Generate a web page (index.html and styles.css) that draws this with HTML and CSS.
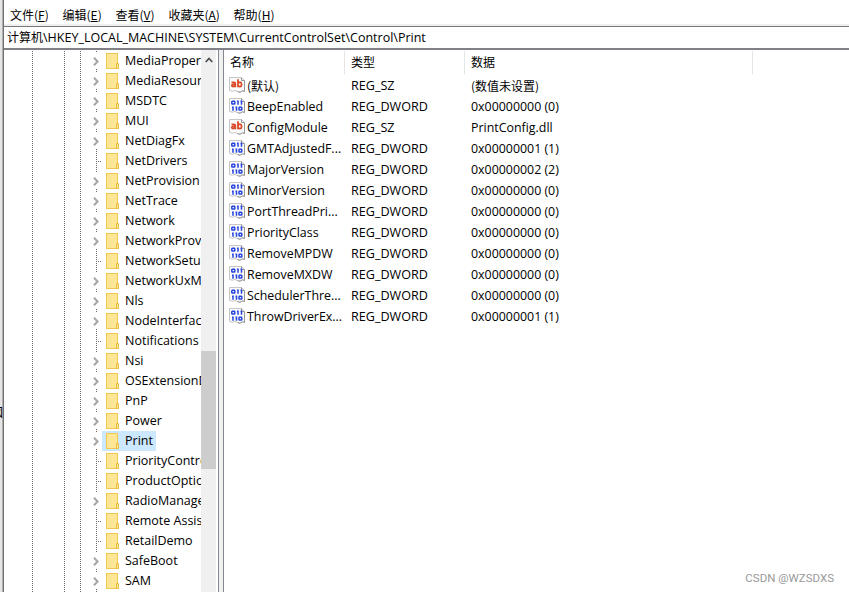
FILE: index.html
```html
<!DOCTYPE html>
<html lang="zh-CN">
  <head>
    <meta charset="UTF-8" />
    <meta name="viewport" content="width=device-width, initial-scale=1.0" />
    <title>注册表编辑器</title>
    <link rel="stylesheet" href="styles.css">
  </head>
  <body>
    <svg class="symbols">
      <symbol id="folder" viewBox="0 0 14 17">
        <rect x="0.5" y="0.5" width="11" height="15" fill="#ffe596" stroke="#efc84f" />
        <path d="M10.5 15.5v-5h2v5z" fill="#ffe596" stroke="#e9bd3c" />
      </symbol>
      <symbol id="chevron" viewBox="0 0 6 9">
        <path d="M1 0.7L4.6 4.5L1 8.3" fill="none" stroke="#a6a6a6" stroke-width="2" />
      </symbol>
      <symbol id="page" viewBox="0 0 16 16">
        <path d="M0.5 13.5V0.5H12.5L15.5 3.5V14.5L13.5 13.8L11 15.3L8.5 14.5L6 13.5L3.5 14.2z" fill="#fafafa" stroke="#c6c6c6" />
        <path d="M12.5 0.5V3.5H15.5V14.5L13.5 13.8L11 15.3L8.5 14.5" fill="none" stroke="#989898" />
      </symbol>
      <symbol id="string" viewBox="0 0 16 16">
        <use href="#page" width="16" height="16" />
        <path d="M2.5 5.3H5Q6.3 5.3 6.3 6.5V10.2M6.3 7.4H4Q2.8 7.6 2.8 8.5T4 9.5Q5.6 9.5 6.3 8.5M9 2.2V10.2M9 6.6Q9.8 5.2 11 5.2Q12.6 5.4 12.6 7.4T11 9.6Q9.8 9.6 9 8.4" fill="none" stroke="#dc4b29" stroke-width="1.8" />
      </symbol>
      <symbol id="binary" viewBox="0 0 16 16">
        <use href="#page" width="16" height="16" />
        <path d="M3.4 3.3H5.2Q5.8 3.3 5.8 4V5.4Q5.8 6.1 5.2 6.1H3.4Q2.8 6.1 2.8 5.4V4Q2.8 3.3 3.4 3.3zM8 3.3H9V6.8M11.5 3.3H12.5V6.8M3 9.3H4V12.8M6.5 9.3H7.5V12.8M10.6 9.3H12.2Q12.8 9.3 12.8 10V11.4Q12.8 12.1 12.2 12.1H10.6Q10 12.1 10 11.4V10Q10 9.3 10.6 9.3z" fill="none" stroke="#2443e0" stroke-width="1.5" />
      </symbol>
    </svg>

    <main>
      <div class="edge"><span>図</span></div>
      <div class="window">
        <nav class="menu">
          <span>文件(<u>F</u>)</span>
          <span>编辑(<u>E</u>)</span>
          <span>查看(<u>V</u>)</span>
          <span>收藏夹(<u>A</u>)</span>
          <span>帮助(<u>H</u>)</span>
        </nav>
        <div class="address"><span class="zh">计算机</span>\HKEY_LOCAL_MACHINE\SYSTEM\CurrentControlSet\Control\Print</div>

        <div class="panes">
          <div class="tree">
            <ul class="keys"></ul>
            <div class="scrollbar">
              <svg class="up" viewBox="0 0 8 6"><path d="M0.7 5L4 1.5L7.3 5" fill="none" stroke="#505050" stroke-width="1.8" /></svg>
              <div class="thumb"></div>
            </div>
          </div>
          <div class="values">
            <div class="row header">
              <div class="zh">名称</div>
              <div class="zh">类型</div>
              <div class="zh">数据</div>
            </div>
          </div>
        </div>
      </div>
      <div class="watermark">CSDN @WZSDXS</div>
    </main>

    <script>
      // a leading "-" marks a key without subkeys
      var keys = [
        "MediaProperties", "MediaResources", "MSDTC", "MUI", "NetDiagFx",
        "-NetDrivers", "NetProvision", "NetTrace", "Network",
        "NetworkProvider", "-NetworkSetup2", "NetworkUxManager", "Nls",
        "NodeInterfaces", "-Notifications", "Nsi", "OSExtensionDatabase",
        "PnP", "Power", "Print", "-PriorityControl", "-ProductOptions",
        "RadioManagement", "-Remote Assistance", "-RetailDemo", "SafeBoot",
        "SAM"
      ];

      var values = [
        ["(默认)", "REG_SZ", "(数值未设置)"],
        ["BeepEnabled", "REG_DWORD", "0x00000000 (0)"],
        ["ConfigModule", "REG_SZ", "PrintConfig.dll"],
        ["GMTAdjustedF...", "REG_DWORD", "0x00000001 (1)"],
        ["MajorVersion", "REG_DWORD", "0x00000002 (2)"],
        ["MinorVersion", "REG_DWORD", "0x00000000 (0)"],
        ["PortThreadPri...", "REG_DWORD", "0x00000000 (0)"],
        ["PriorityClass", "REG_DWORD", "0x00000000 (0)"],
        ["RemoveMPDW", "REG_DWORD", "0x00000000 (0)"],
        ["RemoveMXDW", "REG_DWORD", "0x00000000 (0)"],
        ["SchedulerThre...", "REG_DWORD", "0x00000000 (0)"],
        ["ThrowDriverEx...", "REG_DWORD", "0x00000001 (1)"]
      ];

      var keysElem = document.querySelector(".keys");
      var valuesElem = document.querySelector(".values");

      function icon(id, className) {
        return '<svg class="' + className + '"><use href="#' + id + '" /></svg>';
      }

      keys.forEach(function (key) {
        var leaf = key[0] === "-";
        var name = leaf ? key.slice(1) : key;
        var li = document.createElement("li");
        if (name === "Print") li.className = "selected";
        li.innerHTML =
          '<span class="branch ' + (leaf ? "leaf" : "") + '">' +
          (leaf ? "" : icon("chevron", "chevron")) + "</span>" +
          '<span class="key">' + icon("folder", "folder") + name + "</span>";
        keysElem.append(li);
      });

      values.forEach(function (value) {
        var row = document.createElement("div");
        row.className = "row";
        if (value[0] === "(默认)") row.className += " zh";
        row.innerHTML =
          "<div>" + icon(value[1] === "REG_SZ" ? "string" : "binary", "type") +
          value[0] + '</div><div class="latin">' + value[1] + "</div><div>" + value[2] + "</div>";
        valuesElem.append(row);
      });
    </script>
  </body>
</html>
```
FILE: styles.css
```css
body {
  margin: 0;
  background-color: #fff;
  color: #000;
  font-family: "Open Sans", "Noto Sans CJK SC", sans-serif;
  font-size: 12.5px;
}

main {
  display: flex;
  position: relative;
  height: 592px;
  overflow: hidden;
}

.symbols {
  position: absolute;
  width: 0;
  height: 0;
}

.edge {
  box-sizing: border-box;
  width: 4px;
  padding-top: 405px;
  overflow: hidden;
  background: linear-gradient(to right, #e4e4e4 2px, #b0b0b0 2px, #b0b0b0 3px, #707070 3px);
}

.edge span {
  display: block;
  margin-left: -9px;
  font-size: 12px;
  line-height: 16px;
}

.window {
  display: flex;
  flex-direction: column;
  flex: 1;
  min-width: 0;
}

.menu {
  display: flex;
  box-sizing: border-box;
  gap: 13.8px;
  height: 26px;
  padding: 6px 0 0 6px;
  border-bottom: 2px solid #f0f0f0;
  font-family: "Noto Sans CJK SC", sans-serif;
  font-size: 12px;
  line-height: 18px;
  white-space: nowrap;
}

.menu u {
  text-underline-offset: 1px;
}

.address {
  box-sizing: border-box;
  height: 24px;
  padding-left: 3px;
  border-top: 1px solid #787878;
  border-bottom: 2px solid #828087;
  line-height: 20px;
  white-space: nowrap;
}

.zh {
  font-family: "Noto Sans CJK SC", sans-serif;
  font-size: 12px;
}

.latin {
  font-family: "Open Sans", sans-serif;
  font-size: 12.6px;
}

.panes {
  display: flex;
  flex: 1;
  min-height: 0;
}

.tree {
  display: flex;
  box-sizing: border-box;
  width: 215px;
  border-right: 1px solid #828790;
}

.keys {
  width: 197px;
  margin: 0;
  padding: 1px 0 0;
  overflow: hidden;
  list-style: none;
  background:
    repeating-linear-gradient(transparent 0 1px, #666 1px 2px) 28px 0 / 1px 100% no-repeat,
    repeating-linear-gradient(transparent 0 1px, #666 1px 2px) 60px 0 / 1px 100% no-repeat,
    repeating-linear-gradient(transparent 0 1px, #666 1px 2px) 76px 0 / 1px 100% no-repeat,
    repeating-linear-gradient(transparent 0 1px, #666 1px 2px) 92px 0 / 1px 100% no-repeat;
}

.keys li {
  display: flex;
  height: 20px;
  padding-left: 87px;
}

.branch {
  display: flex;
  flex: none;
  align-items: center;
  width: 11px;
}

.leaf {
  background: repeating-linear-gradient(to right, #666 0 1px, transparent 1px 2px) 5px 10px / 6px 1px no-repeat;
}

.chevron {
  width: 6px;
  height: 9px;
  padding: 4px 3px 3px 2px;
  background-color: #fff;
}

.key {
  display: flex;
  flex: none;
  align-items: center;
  height: 20px;
  padding: 0 3px 0 4px;
  line-height: 20px;
  white-space: nowrap;
}

.selected .key {
  background-color: #cce8ff;
}

.folder {
  flex: none;
  width: 14px;
  height: 17px;
  margin-right: 5px;
}

.scrollbar {
  width: 15px;
  background-color: #f0f0f0;
}

.up {
  display: block;
  width: 8px;
  height: 6px;
  margin: 7px auto 288px 4px;
}

.thumb {
  height: 118px;
  background-color: #cdcdcd;
}

.values {
  flex: 1;
  border-left: 1px solid #828790;
  box-shadow: -4px 0 #f0f0f0;
  margin-left: 4px;
}

.row {
  display: grid;
  grid-template-columns: 121px 120px 288px;
  height: 21px;
  font-size: 12.4px;
  line-height: 21px;
  white-space: nowrap;
}

.row.zh {
  font-size: 12px;
}

.row > div {
  display: flex;
  align-items: center;
  padding-left: 6px;
}

.header {
  height: 23px;
  padding-top: 1px;
}

.header > div {
  padding-bottom: 2px;
  border-right: 1px solid #e5e5e5;
}

.header + .row {
  margin-top: 1px;
}

.type {
  width: 16px;
  height: 16px;
  margin: 0 2px 1px -1px;
}

.watermark {
  position: absolute;
  right: 15px;
  bottom: 5px;
  color: #999;
  font-family: Roboto, sans-serif;
  font-size: 11.5px;
  line-height: 18px;
}
```
